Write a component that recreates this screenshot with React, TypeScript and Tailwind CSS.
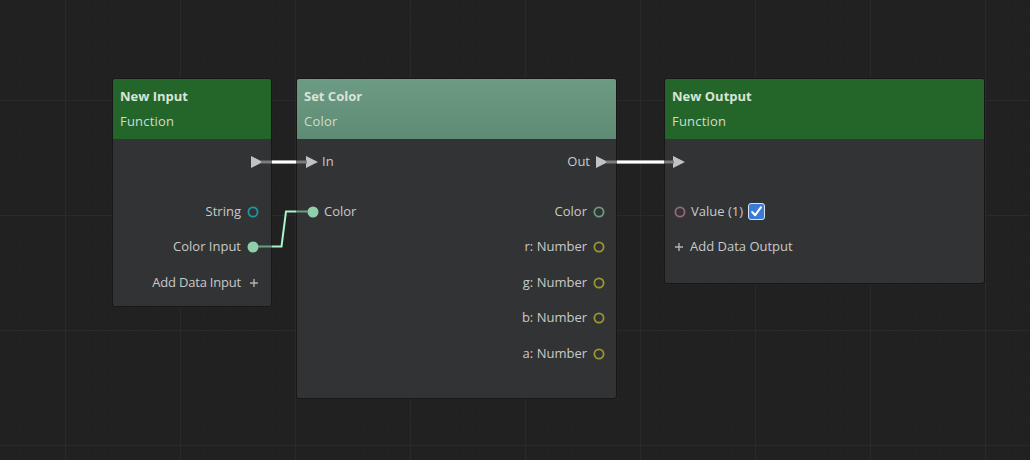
import React from "react";

const font = "font-['Open_Sans',_'Noto_Sans',_sans-serif]";

function ExecPin() {
  return (
    <svg width="12" height="12" viewBox="0 0 12 12" className="block shrink-0">
      <polygon points="0,0 12,6 0,12" fill="#c2c2c2" />
    </svg>
  );
}

function DataPin({ color, filled = false }: { color: string; filled?: boolean }) {
  return (
    <svg width="12" height="12" viewBox="0 0 12 12" className="block shrink-0">
      {filled ? (
        <circle cx="6" cy="6" r="5.5" fill={color} />
      ) : (
        <circle cx="6" cy="6" r="4.6" fill="none" stroke={color} strokeWidth="1.8" />
      )}
    </svg>
  );
}

function Plus() {
  return (
    <svg width="10" height="10" viewBox="0 0 10 10" className="block shrink-0">
      <path d="M5 1 V9 M1 5 H9" stroke="#b4b4b4" strokeWidth="1.4" />
    </svg>
  );
}

function Checkbox() {
  return (
    <div className="w-[17px] h-[17px] rounded-[3px] border border-[#d6e2f4] bg-[#3b7bd6] flex items-center justify-center">
      <svg width="13" height="13" viewBox="0 0 13 13">
        <path d="M2.2 7 L5.2 10.2 L11 2.2" fill="none" stroke="#ffffff" strokeWidth="2" strokeLinecap="round" strokeLinejoin="round" />
      </svg>
    </div>
  );
}

function Header({ title, sub, variant }: { title: string; sub: string; variant: "green" | "sage" }) {
  const bg =
    variant === "green"
      ? "bg-[#24662a]"
      : "bg-gradient-to-b from-[#6c9b83] to-[#5f8b74]";
  return (
    <div className={`${bg} h-[60px] px-[7px] pt-[8px] flex flex-col gap-[7px]`}>
      <div className="h-[18px] leading-[18px] text-[13px] font-bold text-[#d9e4d9]">{title}</div>
      <div className="h-[18px] leading-[18px] text-[13px] text-[#d0dbd0] tracking-[0.2px]">{sub}</div>
    </div>
  );
}

export default function App() {
  return (
    <div className={`relative w-[1030px] h-[460px] overflow-hidden bg-[#212121] ${font}`}>
      {/* grid background */}
      <svg className="absolute inset-0" width="1030" height="460">
        <defs>
          <pattern id="minor" x="19" y="8" width="23" height="23" patternUnits="userSpaceOnUse">
            <path d="M0 0.5 H23 M0.5 0 V23" stroke="#262626" strokeWidth="1" strokeDasharray="1 2" fill="none" />
          </pattern>
          <pattern id="major" x="65" y="100" width="115" height="115" patternUnits="userSpaceOnUse">
            <path d="M0 0.5 H115 M0.5 0 V115" stroke="#2a2a2a" strokeWidth="1" fill="none" />
          </pattern>
        </defs>
        <rect width="1030" height="460" fill="url(#minor)" />
        <rect width="1030" height="460" fill="url(#major)" />
      </svg>

      {/* Node: New Input */}
      <div className="absolute left-[112px] top-[78px] w-[160px] h-[229px] rounded-[3px] border border-[#171717] bg-[#323335] overflow-hidden text-[13px] text-[#c9c9c9]">
        <Header title="New Input" sub="Function" variant="green" />
        <div className="flex flex-col">
          <div className="mt-[9px] h-[28px] flex items-center justify-end pr-[8px]">
            <ExecPin />
          </div>
          <div className="mt-[17.75px] flex flex-col pr-[12px]">
            <div className="h-[35.5px] flex items-center justify-end gap-[6px]">
              <span>String</span>
              <DataPin color="#1e97a6" />
            </div>
            <div className="h-[35.5px] flex items-center justify-end gap-[6px]">
              <span>Color Input</span>
              <DataPin color="#8fd0aa" filled />
            </div>
            <div className="h-[35.5px] flex items-center justify-end gap-[8px]">
              <span className="tracking-[-0.2px]">Add Data Input</span>
              <Plus />
            </div>
          </div>
        </div>
      </div>

      {/* Node: Set Color */}
      <div className="absolute left-[296px] top-[78px] w-[321px] h-[321px] rounded-[3px] border border-[#171717] bg-[#323335] overflow-hidden text-[13px] text-[#c9c9c9]">
        <Header title="Set Color" sub="Color" variant="sage" />
        <div className="flex flex-col">
          <div className="mt-[9px] h-[28px] flex items-center justify-between pl-[9px] pr-[8px]">
            <div className="flex items-center gap-[4px]">
              <ExecPin />
              <span>In</span>
            </div>
            <div className="flex items-center gap-[6px]">
              <span>Out</span>
              <ExecPin />
            </div>
          </div>
          <div className="mt-[17.75px] flex flex-col">
            <div className="h-[35.5px] flex items-center justify-between pl-[10px] pr-[11px]">
              <div className="flex items-center gap-[5px]">
                <DataPin color="#8fd0aa" filled />
                <span>Color</span>
              </div>
              <div className="flex items-center gap-[6px]">
                <span>Color</span>
                <DataPin color="#6a9a80" />
              </div>
            </div>
            {["r", "g", "b", "a"].map((c) => (
              <div key={c} className="h-[35.5px] flex items-center justify-end gap-[6px] pr-[11px]">
                <span>{c}: Number</span>
                <DataPin color="#9c9630" />
              </div>
            ))}
          </div>
        </div>
      </div>

      {/* Node: New Output */}
      <div className="absolute left-[664px] top-[78px] w-[321px] h-[206px] rounded-[3px] border border-[#171717] bg-[#323335] overflow-hidden text-[13px] text-[#c9c9c9]">
        <Header title="New Output" sub="Function" variant="green" />
        <div className="flex flex-col">
          <div className="mt-[9px] h-[28px] flex items-center pl-[8px]">
            <ExecPin />
          </div>
          <div className="mt-[17.75px] flex flex-col pl-[9px]">
            <div className="h-[35.5px] flex items-center">
              <DataPin color="#94687a" />
              <span className="ml-[5px]">Value (1)</span>
              <span className="ml-[5px]">
                <Checkbox />
              </span>
            </div>
            <div className="h-[35.5px] flex items-center gap-[6px]">
              <Plus />
              <span>Add Data Output</span>
            </div>
          </div>
        </div>
      </div>

      {/* connections */}
      <svg className="absolute inset-0 pointer-events-none" width="1030" height="460">
        <line x1="261" y1="162" x2="307" y2="162" stroke="#7c7c7c" strokeWidth="3" />
        <line x1="272" y1="162" x2="296" y2="162" stroke="#ffffff" strokeWidth="3" />
        <line x1="606" y1="162" x2="674" y2="162" stroke="#7c7c7c" strokeWidth="3" />
        <line x1="617" y1="162" x2="664" y2="162" stroke="#ffffff" strokeWidth="3" />
        <line x1="258" y1="246.5" x2="272" y2="246.5" stroke="#6f9c83" strokeWidth="2" />
        <line x1="296" y1="211.5" x2="308" y2="211.5" stroke="#6f9c83" strokeWidth="2" />
        <path d="M272 246.5 L281.5 246.5 L286 211.5 L296 211.5" fill="none" stroke="#a6f5c9" strokeWidth="2" />
      </svg>
    </div>
  );
}
